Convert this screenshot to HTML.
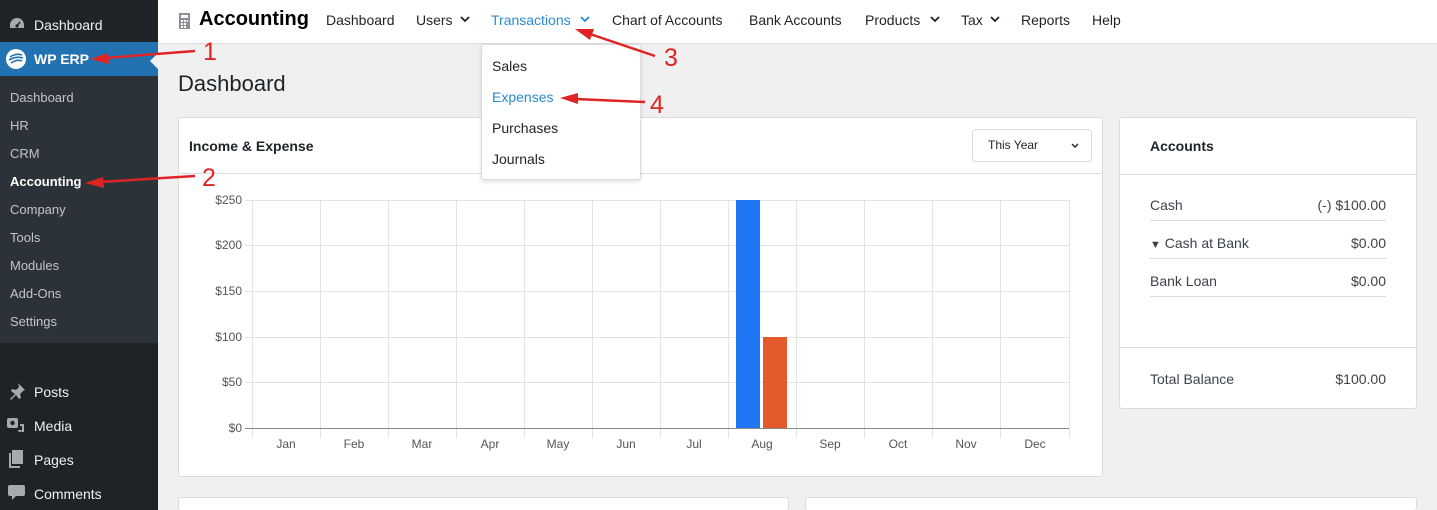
<!DOCTYPE html>
<html style="width:1437px;height:510px;overflow:hidden"><head><meta charset="utf-8"><style>
*{box-sizing:border-box;margin:0;padding:0}
body{width:1437px;height:510px;overflow:hidden;background:#f0f0f1;font-family:"Liberation Sans",Arial,sans-serif;position:relative;color:#1d2327}
.a{position:absolute;white-space:nowrap}
#sb{left:0;top:0;width:158px;height:510px;background:#1d2327}
#sub{left:0;top:76px;width:158px;height:267px;background:#2c3338}
.si{font-size:13px;color:#c3c4c7;left:10px}
.mi{font-size:14px;color:#f0f0f1;left:34px}
#hdr{left:158px;top:0;width:1279px;height:44px;background:#fff;border-bottom:1px solid #dcdcde}
.nav{top:12px;font-size:14px;color:#1d2327}
.card{background:#fff;border:1px solid #dcdcde;border-radius:3px}
.yl{font-size:12px;color:#555;text-align:right;width:40px;left:202px}
.xl{font-size:12px;color:#555;width:68px;text-align:center;top:437px}
.ar{font-size:14px;color:#3c434a}
.chev{position:absolute;top:16px}
</style></head><body>
<div class="a" id="sb"></div>
<div class="a" id="sub"></div>
<div class="a" style="left:0;top:42px;width:158px;height:34px;background:#2271b1"></div>
<svg class="a" style="left:8px;top:15px" width="18" height="18" viewBox="0 0 18 18"><path d="M9 3a7 7 0 0 0-7 7v3h14v-3a7 7 0 0 0-7-7z" fill="#a7aaad"/><circle cx="9" cy="11" r="1.6" fill="#1d2327"/><path d="M9 11l3-4" stroke="#1d2327" stroke-width="1.5"/></svg>
<div class="a mi" style="top:17px">Dashboard</div>
<svg class="a" style="left:6px;top:49px" width="20" height="20" viewBox="0 0 20 20"><circle cx="10" cy="10" r="10" fill="#fff"/><path d="M4 8q6-4 12-2M3 11q7-4 14-2M5 14q6-4 11-2" stroke="#2271b1" stroke-width="1.6" fill="none"/></svg>
<div class="a mi" style="top:51px;color:#fff;font-weight:bold">WP ERP</div>
<div class="a" style="left:150px;top:53px;width:0;height:0;border-top:8px solid transparent;border-bottom:8px solid transparent;border-right:8px solid #f0f0f1"></div>
<div class="a si" style="top:90px">Dashboard</div>
<div class="a si" style="top:118px">HR</div>
<div class="a si" style="top:146px">CRM</div>
<div class="a si" style="top:174px;color:#fff;font-weight:bold">Accounting</div>
<div class="a si" style="top:202px">Company</div>
<div class="a si" style="top:230px">Tools</div>
<div class="a si" style="top:258px">Modules</div>
<div class="a si" style="top:286px">Add-Ons</div>
<div class="a si" style="top:314px">Settings</div>
<svg class="a" style="left:8px;top:382px" width="18" height="18" viewBox="0 0 18 18"><path d="M10 1l7 7-2 1-3 3 1 4-2 1-3-4-5 5-1-1 5-5-4-3 1-2 4 1 3-3z" fill="#a7aaad"/></svg>
<div class="a mi" style="top:384px">Posts</div>
<svg class="a" style="left:7px;top:416px" width="18" height="18" viewBox="0 0 18 18"><rect x="0" y="2" width="11" height="10" rx="2" fill="#a7aaad"/><circle cx="5.5" cy="7" r="2.2" fill="#1d2327"/><path d="M13 8h4v8h-2v-6h-2z M11 14a2 2 0 1 0 4 0" fill="#a7aaad"/></svg>
<div class="a mi" style="top:418px">Media</div>
<svg class="a" style="left:8px;top:450px" width="16" height="18" viewBox="0 0 16 18"><rect x="4" y="0" width="11" height="14" fill="#a7aaad"/><path d="M1 3v15h11v-2H3V3z" fill="#a7aaad"/></svg>
<div class="a mi" style="top:452px">Pages</div>
<svg class="a" style="left:8px;top:484px" width="17" height="18" viewBox="0 0 17 18"><path d="M2 1h13a2 2 0 0 1 2 2v7a2 2 0 0 1-2 2H8l-4 4v-4H2a2 2 0 0 1-2-2V3a2 2 0 0 1 2-2z" fill="#a7aaad"/></svg>
<div class="a mi" style="top:486px">Comments</div>

<div class="a" id="hdr"></div>
<svg class="a" style="left:179px;top:13px" width="11" height="16" viewBox="0 0 11 16"><rect width="11" height="16" fill="#8c8f94"/><rect x="2" y="2" width="7" height="3" fill="#fff"/><g fill="#fff"><rect x="2" y="7" width="2" height="2"/><rect x="5" y="7" width="2" height="2"/><rect x="8" y="7" width="1" height="2"/><rect x="2" y="10" width="2" height="2"/><rect x="5" y="10" width="2" height="2"/><rect x="2" y="13" width="2" height="2"/><rect x="5" y="13" width="2" height="2"/></g></svg>
<div class="a" style="left:199px;top:8px;font-size:20px;font-weight:bold;color:#000">Accounting</div>
<div class="a nav" style="left:326px">Dashboard</div>
<div class="a nav" style="left:416px">Users</div>
<div class="a nav" style="left:491px;color:#2a8ad4">Transactions</div>
<div class="a nav" style="left:612px">Chart of Accounts</div>
<div class="a nav" style="left:749px">Bank Accounts</div>
<div class="a nav" style="left:865px">Products</div>
<div class="a nav" style="left:961px">Tax</div>
<div class="a nav" style="left:1021px">Reports</div>
<div class="a nav" style="left:1092px">Help</div>
<svg class="chev" style="left:460px" width="10" height="7"><path d="M1 1l4 4 4-4" stroke="#1d2327" stroke-width="1.8" fill="none"/></svg>
<svg class="chev" style="left:580px" width="10" height="7"><path d="M1 1l4 4 4-4" stroke="#2a8ad4" stroke-width="1.8" fill="none"/></svg>
<svg class="chev" style="left:930px" width="10" height="7"><path d="M1 1l4 4 4-4" stroke="#1d2327" stroke-width="1.8" fill="none"/></svg>
<svg class="chev" style="left:990px" width="10" height="7"><path d="M1 1l4 4 4-4" stroke="#1d2327" stroke-width="1.8" fill="none"/></svg>

<div class="a" style="left:178px;top:71px;font-size:22px;color:#1d2327">Dashboard</div>

<div class="a card" style="left:178px;top:117px;width:925px;height:360px"></div>
<div class="a" style="left:179px;top:173px;width:923px;height:1px;background:#dcdcde"></div>
<div class="a" style="left:189px;top:138px;font-size:14px;font-weight:bold">Income &amp; Expense</div>
<div class="a" style="left:972px;top:129px;width:120px;height:33px;border:1px solid #dcdcde;border-radius:3px;background:#fff"></div>
<div class="a" style="left:988px;top:138px;font-size:12px">This Year</div>
<svg class="a" style="left:1071px;top:143px" width="8" height="6"><path d="M1 1l3 3 3-3" stroke="#1d2327" stroke-width="1.4" fill="none"/></svg>

<svg class="a" style="left:0;top:0" width="1437" height="510">
<g stroke="#e3e3e3" stroke-width="1">
<line x1="252" y1="200.5" x2="1069" y2="200.5"/><line x1="252" y1="245.5" x2="1069" y2="245.5"/><line x1="252" y1="291.5" x2="1069" y2="291.5"/><line x1="252" y1="337.5" x2="1069" y2="337.5"/><line x1="252" y1="382.5" x2="1069" y2="382.5"/>
<line x1="252.5" y1="200" x2="252.5" y2="438"/><line x1="320.5" y1="200" x2="320.5" y2="438"/><line x1="388.5" y1="200" x2="388.5" y2="438"/><line x1="456.5" y1="200" x2="456.5" y2="438"/><line x1="524.5" y1="200" x2="524.5" y2="438"/><line x1="592.5" y1="200" x2="592.5" y2="438"/><line x1="660.5" y1="200" x2="660.5" y2="438"/><line x1="728.5" y1="200" x2="728.5" y2="438"/><line x1="796.5" y1="200" x2="796.5" y2="438"/><line x1="864.5" y1="200" x2="864.5" y2="438"/><line x1="932.5" y1="200" x2="932.5" y2="438"/><line x1="1000.5" y1="200" x2="1000.5" y2="438"/><line x1="1069.5" y1="200" x2="1069.5" y2="438"/>
<line x1="245" y1="200.5" x2="252" y2="200.5"/><line x1="245" y1="245.5" x2="252" y2="245.5"/><line x1="245" y1="291.5" x2="252" y2="291.5"/><line x1="245" y1="337.5" x2="252" y2="337.5"/><line x1="245" y1="382.5" x2="252" y2="382.5"/>
</g>
<rect x="736" y="200" width="24" height="228" fill="#1f77f5"/>
<rect x="763" y="337" width="24" height="91" fill="#e55a2b"/>
<line x1="245" y1="428.5" x2="1069" y2="428.5" stroke="#888"/>
</svg>
<div class="a yl" style="top:193px">$250</div>
<div class="a yl" style="top:238px">$200</div>
<div class="a yl" style="top:284px">$150</div>
<div class="a yl" style="top:330px">$100</div>
<div class="a yl" style="top:375px">$50</div>
<div class="a yl" style="top:421px">$0</div>
<div class="a xl" style="left:252px">Jan</div><div class="a xl" style="left:320px">Feb</div><div class="a xl" style="left:388px">Mar</div><div class="a xl" style="left:456px">Apr</div><div class="a xl" style="left:524px">May</div><div class="a xl" style="left:592px">Jun</div><div class="a xl" style="left:660px">Jul</div><div class="a xl" style="left:728px">Aug</div><div class="a xl" style="left:796px">Sep</div><div class="a xl" style="left:864px">Oct</div><div class="a xl" style="left:932px">Nov</div><div class="a xl" style="left:1001px">Dec</div>

<div class="a card" style="left:1119px;top:117px;width:298px;height:292px"></div>
<div class="a" style="left:1120px;top:174px;width:296px;height:1px;background:#dcdcde"></div>
<div class="a" style="left:1120px;top:347px;width:296px;height:1px;background:#dcdcde"></div>
<div class="a" style="left:1150px;top:138px;font-size:14px;font-weight:bold">Accounts</div>
<div class="a ar" style="left:1150px;top:197px">Cash</div><div class="a ar" style="right:51px;top:197px">(-) $100.00</div>
<div class="a" style="left:1150px;top:220px;width:236px;height:1px;background:#dcdcde"></div>
<div class="a ar" style="left:1150px;top:235px"><span style="font-size:11px">&#9660;</span> Cash at Bank</div><div class="a ar" style="right:51px;top:235px">$0.00</div>
<div class="a" style="left:1150px;top:258px;width:236px;height:1px;background:#dcdcde"></div>
<div class="a ar" style="left:1150px;top:273px">Bank Loan</div><div class="a ar" style="right:51px;top:273px">$0.00</div>
<div class="a" style="left:1150px;top:296px;width:236px;height:1px;background:#dcdcde"></div>
<div class="a ar" style="left:1150px;top:371px">Total Balance</div><div class="a ar" style="right:51px;top:371px">$100.00</div>

<div class="a card" style="left:178px;top:497px;width:611px;height:13px;border-bottom:none"></div>
<div class="a card" style="left:805px;top:497px;width:612px;height:13px;border-bottom:none"></div>

<div class="a" style="left:481px;top:44px;width:160px;height:136px;background:#fff;border:1px solid #dcdcde;border-radius:3px;box-shadow:0 2px 4px rgba(0,0,0,.12)"></div>
<div class="a" style="left:492px;top:58px;font-size:14px">Sales</div>
<div class="a" style="left:492px;top:89px;font-size:14px;color:#2a8ad4">Expenses</div>
<div class="a" style="left:492px;top:120px;font-size:14px">Purchases</div>
<div class="a" style="left:492px;top:151px;font-size:14px">Journals</div>

<svg class="a" style="left:0;top:0" width="1437" height="510">
<g fill="#e02424" stroke="#e02424" stroke-width="2.5">
<line x1="195" y1="51" x2="105" y2="58"/><path d="M90 59l18-6 1 11z" stroke="none"/>
<line x1="195" y1="176" x2="100" y2="182"/><path d="M85 183l18-6 1 11z" stroke="none"/>
<line x1="655" y1="56" x2="590" y2="34"/><path d="M575 29l19 0-4 11z" stroke="none"/>
<line x1="645" y1="102" x2="575" y2="99"/><path d="M560 98l18-5 0 11z" stroke="none"/>
</g>
<g fill="#e02424" font-family="Liberation Sans,sans-serif" font-size="25">
<text x="203" y="60">1</text><text x="202" y="186">2</text><text x="664" y="66">3</text><text x="650" y="113">4</text>
</g>
</svg>
</body></html>
